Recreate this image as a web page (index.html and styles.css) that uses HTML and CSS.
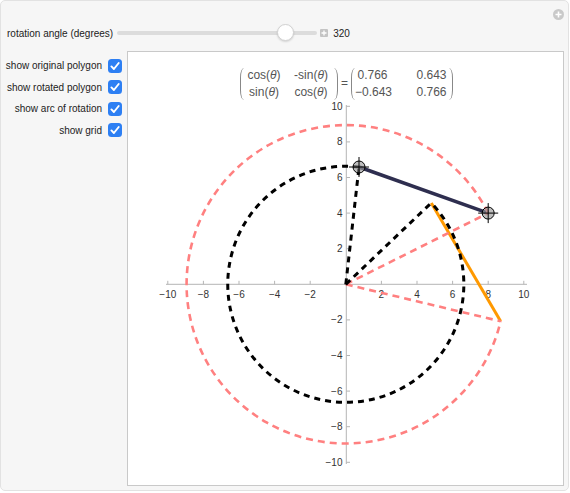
FILE: index.html
```html
<!DOCTYPE html>
<html>
<head>
<meta charset="utf-8">
<link rel="stylesheet" href="styles.css">
</head>
<body>
<div class="panel">
  <div class="topbar">
    <span class="add-btn"><svg width="11" height="11" viewBox="0 0 11 11"><circle cx="5.5" cy="5.5" r="5.5" fill="#c9c9c9"/><path d="M5.5 2.5v6M2.5 5.5h6" stroke="#fff" stroke-width="1.6"/></svg></span>
  </div>
  <div class="slider-row">
    <span class="slider-label">rotation angle (degrees)</span>
    <div class="track"><div class="thumb" style="left:160px"></div></div>
    <span class="step-btn"><svg width="8" height="8" viewBox="0 0 8 8"><rect width="8" height="8" rx="1" fill="#c4c4c4"/><path d="M4 1.5v5M1.5 4h5" stroke="#fff" stroke-width="1.3"/></svg></span>
    <span class="slider-value">320</span>
  </div>
  <div class="content">
    <div class="controls">
      <div class="ctl"><span class="ctl-label">show original polygon</span><span class="cb"><svg width="14" height="14" viewBox="0 0 14 14"><path d="M3.4 7.4l2.5 2.6 4.8-6" fill="none" stroke="#fff" stroke-width="1.9" stroke-linecap="round" stroke-linejoin="round"/></svg></span></div>
      <div class="ctl"><span class="ctl-label">show rotated polygon</span><span class="cb"><svg width="14" height="14" viewBox="0 0 14 14"><path d="M3.4 7.4l2.5 2.6 4.8-6" fill="none" stroke="#fff" stroke-width="1.9" stroke-linecap="round" stroke-linejoin="round"/></svg></span></div>
      <div class="ctl"><span class="ctl-label">show arc of rotation</span><span class="cb"><svg width="14" height="14" viewBox="0 0 14 14"><path d="M3.4 7.4l2.5 2.6 4.8-6" fill="none" stroke="#fff" stroke-width="1.9" stroke-linecap="round" stroke-linejoin="round"/></svg></span></div>
      <div class="ctl"><span class="ctl-label">show grid</span><span class="cb"><svg width="14" height="14" viewBox="0 0 14 14"><path d="M3.4 7.4l2.5 2.6 4.8-6" fill="none" stroke="#fff" stroke-width="1.9" stroke-linecap="round" stroke-linejoin="round"/></svg></span></div>
    </div>
    <div class="plot">
      <div class="plot-label">
        <span class="mat m1">
          <span class="paren left"></span>
          <span class="cells">
            <span>cos(<i>θ</i>)</span><span>-sin(<i>θ</i>)</span>
            <span>sin(<i>θ</i>)</span><span>cos(<i>θ</i>)</span>
          </span>
          <span class="paren right"></span>
        </span>
        <span class="eqsign">=</span>
        <span class="mat m2">
          <span class="paren left"></span>
          <span class="cells">
            <span>0.766</span><span>0.643</span>
            <span>−0.643</span><span>0.766</span>
          </span>
          <span class="paren right"></span>
        </span>
      </div>
      <svg class="chart" width="435" height="384" viewBox="128 100 435 384">
        <g stroke="#b5b5b5" stroke-width="1">
          <line x1="166" y1="284.3" x2="527" y2="284.3"/>
          <line x1="346.3" y1="105" x2="346.3" y2="464"/>
          <line x1="167.8" y1="284.3" x2="167.8" y2="280.8"/>
          <line x1="203.4" y1="284.3" x2="203.4" y2="280.8"/>
          <line x1="239" y1="284.3" x2="239" y2="280.8"/>
          <line x1="274.6" y1="284.3" x2="274.6" y2="280.8"/>
          <line x1="310.2" y1="284.3" x2="310.2" y2="280.8"/>
          <line x1="381.4" y1="284.3" x2="381.4" y2="280.8"/>
          <line x1="417" y1="284.3" x2="417" y2="280.8"/>
          <line x1="452.6" y1="284.3" x2="452.6" y2="280.8"/>
          <line x1="488.2" y1="284.3" x2="488.2" y2="280.8"/>
          <line x1="523.8" y1="284.3" x2="523.8" y2="280.8"/>
          <line x1="346.3" y1="106.3" x2="350" y2="106.3"/>
          <line x1="346.3" y1="141.9" x2="350" y2="141.9"/>
          <line x1="346.3" y1="177.5" x2="350" y2="177.5"/>
          <line x1="346.3" y1="213.1" x2="350" y2="213.1"/>
          <line x1="346.3" y1="248.7" x2="350" y2="248.7"/>
          <line x1="346.3" y1="319.9" x2="350" y2="319.9"/>
          <line x1="346.3" y1="355.5" x2="350" y2="355.5"/>
          <line x1="346.3" y1="391.1" x2="350" y2="391.1"/>
          <line x1="346.3" y1="426.7" x2="350" y2="426.7"/>
          <line x1="346.3" y1="462.3" x2="350" y2="462.3"/>
        </g>
        <g class="ticklbl" text-anchor="middle">
          <text x="167.8" y="298">−10</text>
          <text x="203.4" y="298">−8</text>
          <text x="239" y="298">−6</text>
          <text x="274.6" y="298">−4</text>
          <text x="310.2" y="298">−2</text>
          <text x="381.4" y="298">2</text>
          <text x="417" y="298">4</text>
          <text x="452.6" y="298">6</text>
          <text x="488.2" y="298">8</text>
          <text x="523.8" y="298">10</text>
        </g>
        <g class="ticklbl" text-anchor="end">
          <text x="342.5" y="109.8">10</text>
          <text x="342.5" y="145.4">8</text>
          <text x="342.5" y="181">6</text>
          <text x="342.5" y="216.6">4</text>
          <text x="342.5" y="252.2">2</text>
          <text x="342.5" y="323.4">−2</text>
          <text x="342.5" y="359">−4</text>
          <text x="342.5" y="394.6">−6</text>
          <text x="342.5" y="430.2">−8</text>
          <text x="342.5" y="465.8">−10</text>
        </g>
        <line x1="431.29" y1="202.91" x2="500.65" y2="321.29" stroke="#ff9900" stroke-width="3"/>
        <line x1="359" y1="167" x2="488.2" y2="213.1" stroke="#2e2e4f" stroke-width="3.5"/>
        <g fill="none" stroke="#ff8080" stroke-width="2.6" stroke-dasharray="7 5">
          <path d="M488.2 213.1 A159.21 159.21 0 1 0 500.65 321.29"/>
          <line x1="345.8" y1="284.3" x2="488.2" y2="213.1"/>
          <line x1="345.8" y1="284.3" x2="500.65" y2="321.29"/>
        </g>
        <g fill="none" stroke="#000" stroke-width="3" stroke-dasharray="6 5">
          <path d="M359 167 A118.04 118.04 0 1 0 431.29 202.91"/>
          <line x1="345.8" y1="284.3" x2="359" y2="167"/>
          <line x1="345.8" y1="284.3" x2="431.29" y2="202.91"/>
        </g>
        <g class="loc">
          <circle cx="359" cy="167" r="6"/>
          <path d="M349 167h20M359 157v20"/>
          <circle cx="488.2" cy="213.1" r="6"/>
          <path d="M478.2 213.1h20M488.2 203.1v20"/>
        </g>
      </svg>
    </div>
  </div>
</div>
</body>
</html>
```
FILE: styles.css
```css
html, body {
  margin: 0;
  padding: 0;
  background: #ffffff;
}
body {
  font-family: "Liberation Sans", Arial, sans-serif;
  color: #222;
}
.panel {
  width: 569px;
  height: 491px;
  box-sizing: border-box;
  border: 1px solid #e2e2e2;
  border-radius: 5px;
  background: #f6f6f6;
  padding: 8px 4px 4px 5px;
  display: flex;
  flex-direction: column;
}
.topbar {
  height: 12px;
  display: flex;
  justify-content: flex-end;
  align-items: flex-start;
}
.add-btn {
  display: block;
  width: 11px;
  height: 11px;
  margin-right: 0px;
}
.add-btn svg { display: block; }
.slider-row {
  height: 24px;
  display: flex;
  align-items: center;
  font-size: 10px;
}
.slider-label {
  margin-left: 1px;
  white-space: nowrap;
}
.track {
  position: relative;
  width: 200px;
  height: 4px;
  margin-left: 4px;
  border-radius: 2px;
  background: #dcdcdc;
}
.thumb {
  position: absolute;
  top: -7px;
  width: 17px;
  height: 17px;
  box-sizing: border-box;
  border-radius: 50%;
  background: #fff;
  border: 1px solid #d2d2d2;
  box-shadow: 0 1px 2px rgba(0,0,0,0.15);
}
.step-btn {
  display: block;
  width: 8px;
  height: 8px;
  margin-left: 3px;
}
.step-btn svg { display: block; }
.slider-value {
  margin-left: 5px;
}
.content {
  flex: 1;
  display: flex;
  margin-top: 6px;
}
.controls {
  width: 121px;
  padding-top: 4px;
  display: flex;
  flex-direction: column;
}
.ctl {
  height: 21.5px;
  display: flex;
  align-items: center;
  justify-content: flex-end;
  padding-right: 5px;
  font-size: 10px;
}
.ctl-label {
  white-space: nowrap;
}
.cb {
  display: block;
  width: 14px;
  height: 14px;
  margin-left: 6px;
  border-radius: 3.5px;
  background: #2d7ff3;
}
.cb svg { display: block; }
.plot {
  width: 437px;
  box-sizing: border-box;
  border: 1px solid #c9c9c9;
  background: #fff;
  display: flex;
  flex-direction: column;
}
.plot-label {
  height: 48px;
  box-sizing: border-box;
  padding-top: 15px;
  display: flex;
  justify-content: center;
  align-items: flex-start;
  font-size: 12px;
  color: #555;
  line-height: 17px;
}
.mat {
  display: flex;
  align-items: stretch;
  padding-left: 2px;
}
.cells {
  display: grid;
  text-align: center;
  white-space: nowrap;
}
.m1 .cells {
  grid-template-columns: 40px 46px;
  column-gap: 4px;
}
.m2 .cells {
  grid-template-columns: 35px 35px;
  column-gap: 24px;
}
.paren {
  width: 4px;
  box-sizing: border-box;
  margin: 1px 0;
}
.paren.left {
  border-left: 1px solid #888;
  border-radius: 7px 0 0 7px / 17px 0 0 17px;
}
.paren.right {
  border-right: 1px solid #888;
  border-radius: 0 7px 7px 0 / 0 17px 17px 0;
}
.eqsign {
  align-self: center;
  margin: 0 1px 0 3px;
  line-height: 17px;
}
.chart {
  display: block;
}
.ticklbl text {
  font-family: "Liberation Sans", Arial, sans-serif;
  font-size: 10px;
  fill: #333;
}
.loc circle {
  fill: #9a9a9a;
  fill-opacity: 0.65;
  stroke: #000;
  stroke-width: 1;
}
.loc path {
  stroke: #000;
  stroke-width: 1;
  fill: none;
}
```
